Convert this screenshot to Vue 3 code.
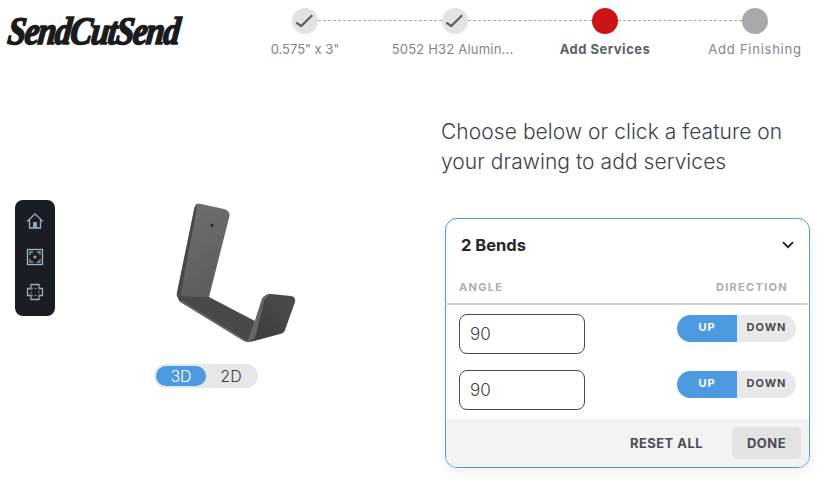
<script setup>
const steps = [
  { label: '0.575" x 3"', state: 'passed' },
  { label: '5052 H32 Alumin...', state: 'passed' },
  { label: 'Add Services', state: 'active' },
  { label: 'Add Finishing', state: 'todo' }
]
const rows = [90, 90]
</script>

<template>
  <div class="page">
    <header class="top">
      <div class="logo"><span class="logo-text">SendCutSend</span></div>
      <ol class="steps">
        <li v-for="s in steps" :key="s.label" class="step" :class="s.state">
          <span class="dot">
            <svg v-if="s.state === 'passed'" width="26" height="26" viewBox="0 0 26 26">
              <path d="M4.200 14.700 L9.200 18 L20.200 7.200" fill="none" stroke="#5b6168" stroke-width="2.200" />
            </svg>
          </span>
          <span class="label">{{ s.label }}</span>
        </li>
      </ol>
    </header>

    <main class="main">
      <section class="stage">
        <nav class="tools">
          <svg width="18" height="18" viewBox="0 0 18 18" fill="none" stroke="#9fb3c2" stroke-width="1.300">
            <path d="M1.200 9.500 L9 1.800 L16.800 9.500 M3.500 8 V16 H14.500 V8" />
            <rect x="7" y="10" width="4" height="6" fill="#8fa5b5" stroke="none" />
          </svg>
          <svg width="18" height="18" viewBox="0 0 18 18" fill="none" stroke-width="1.300">
            <rect x="1.500" y="1.500" width="15" height="15" stroke="#b0b0b6" />
            <path d="M4 7 V4 H7 M11 4 H14 V7 M14 11 V14 H11 M7 14 H4 V11" stroke="#6fa3c0" />
            <path d="M7.500 9 H10.500 M9 7.500 V10.500" stroke="#d0a070" />
          </svg>
          <svg width="18" height="18" viewBox="0 0 18 18" fill="none" stroke="#a0a8b0" stroke-width="1.300">
            <path d="M5 1.500 H13 V5.500 H16.500 V12.500 H13 V16.500 H5 V12.500 H1.500 V5.500 H5 Z" />
            <path d="M5 5.500 H13 V12.500 H5 Z" stroke-dasharray="2 1.500" stroke="#6f7780" />
          </svg>
        </nav>
        <div class="viewer">
          <svg class="model" width="170" height="160" viewBox="0 0 170 160">
            <defs>
              <linearGradient id="back" x1="0" y1="0" x2="0.3" y2="1">
                <stop offset="0" stop-color="#707070" />
                <stop offset="1" stop-color="#5e5e5e" />
              </linearGradient>
              <linearGradient id="tip" x1="1" y1="0" x2="0" y2="1">
                <stop offset="0" stop-color="#4c4c4c" />
                <stop offset="1" stop-color="#3c3c3c" />
              </linearGradient>
              <filter id="soft" x="-5%" y="-5%" width="110%" height="110%">
                <feGaussianBlur stdDeviation="0.400" />
              </filter>
            </defs>
            <g filter="url(#soft)">
              <path d="M57 14 Q58 13 61 14 L84 19 Q90 21 89.500 26 L69 107 L39 108 Q36 107 37 103 L54 20 Q55 15 57 14 Z" fill="url(#back)" />
              <path d="M57 14 Q55 15 54 20 L37 103 Q36 107 39 108 L40 108 L56.500 20 Z" fill="#4a4a4a" />
              <path d="M38 106 L69 107 L115 131 L108 152 L104 151 L42 113 Q37 110 38 106 Z" fill="#4a4a4a" />
              <path d="M42 111 L104 149 L108 152 L104 151 L42 113 Z" fill="#6a6a6a" />
              <path d="M115 131 L122 109 Q125 104 131 104 L151 106 Q156 107 155 112 L145 140 Q144 143 140 144 L114 151 Q110 152 108 152 Z" fill="url(#tip)" />
              <path d="M115 131 L122 109 Q125 104 131 104 L128 106 Q125 108 124 112 L115 148 L108 152 Z" fill="#666" />
              <circle cx="72" cy="35.500" r="1.700" fill="#2e2e2e" />
            </g>
          </svg>
          <div class="dim">
            <span class="dim-on">3D</span>
            <span class="dim-off">2D</span>
          </div>
        </div>
      </section>

      <section class="side">
        <h1 class="title">Choose below or click a feature on your drawing to add services</h1>
        <div class="card">
          <div class="card-head">
            <span class="card-name">2 Bends</span>
            <svg width="12" height="8" viewBox="0 0 12 8">
              <path d="M1 1.200 L6 6.200 L11 1.200" fill="none" stroke="#1c1f24" stroke-width="1.800" />
            </svg>
          </div>
          <div class="cols">
            <span>ANGLE</span>
            <span>DIRECTION</span>
          </div>
          <div class="rows">
            <div v-for="(r, i) in rows" :key="i" class="row">
              <div class="angle">{{ r }}</div>
              <div class="dir">
                <span class="dir-up">UP</span>
                <span class="dir-down">DOWN</span>
              </div>
            </div>
          </div>
          <div class="foot">
            <span class="reset">RESET ALL</span>
            <span class="done-btn">DONE</span>
          </div>
        </div>
      </section>
    </main>
  </div>
</template>

<style scoped>
.page {
  width: 828px;
  height: 495px;
  overflow: hidden;
  background: #fff;
  font-family: Inter, "Open Sans", sans-serif;
  color: #4a4f57;
}
.top {
  display: flex;
  height: 70px;
}
.logo {
  flex: none;
  width: 230px;
  box-sizing: border-box;
  padding: 11px 0 0 8px;
  font-family: "Liberation Serif", serif;
  font-style: italic;
  font-weight: 700;
  font-size: 33px;
  line-height: 40px;
  letter-spacing: -1.300px;
  color: #1b1b1d;
  -webkit-text-stroke: 1.400px #1b1b1d;
  white-space: nowrap;
}
.logo-text {
  display: inline-block;
  transform: scaleY(1.180) skewX(-7deg);
  transform-origin: left center;
}
.steps {
  flex: none;
  display: flex;
  margin: 0;
  padding: 8px 0 0;
  list-style: none;
}
.step {
  position: relative;
  flex: none;
  width: 150px;
  display: flex;
  flex-direction: column;
  align-items: center;
  gap: 7px;
}
.step:not(:last-child)::after {
  content: "";
  position: absolute;
  top: 12px;
  left: 88px;
  width: 124px;
  border-top: 1px dashed #a8a8a8;
}
.dot {
  width: 26px;
  height: 26px;
  border-radius: 50%;
  background: #e3e3e3;
}
.active .dot { background: #cc1417; }
.todo .dot { background: #a9a8ac; }
.label {
  font-size: 13px;
  line-height: 16px;
  color: #80858b;
  white-space: nowrap;
  letter-spacing: 0.200px;
}
.passed:first-child .label {
  letter-spacing: -0.050px;
}
.passed:nth-child(2) .label {
  margin-right: 5px;
}
.active .label {
  font-weight: 700;
  letter-spacing: 0.500px;
  color: #5b6169;
}
.todo .label {
  letter-spacing: 0.750px;
}
.main {
  display: flex;
}
.stage {
  flex: none;
  width: 441px;
  box-sizing: border-box;
  padding: 120px 0 0 15px;
  display: flex;
  align-items: flex-start;
  gap: 85px;
}
.tools {
  flex: none;
  margin-top: 10px;
  width: 40px;
  height: 116px;
  box-sizing: border-box;
  padding: 12px 0 15px;
  border-radius: 8px;
  background: #1a1e24;
  display: flex;
  flex-direction: column;
  align-items: center;
  justify-content: space-between;
}
.viewer {
  display: flex;
  flex-direction: column;
  align-items: flex-start;
}
.model {
  display: block;
}
.dim {
  margin: 14px 0 0 14px;
  width: 104px;
  height: 24px;
  box-sizing: border-box;
  padding: 2px;
  border-radius: 12px;
  background: #e6e8e8;
  display: flex;
  font-size: 16px;
  font-weight: 300;
  line-height: 20px;
  text-align: center;
}
.dim-on {
  width: 50px;
  border-radius: 10px;
  background: #4e9ae0;
  color: #fff;
}
.dim-off {
  flex: 1;
  color: #3a3d42;
}
.side {
  width: 387px;
}
.title {
  margin: 47px 0 0;
  width: 350px;
  font-size: 21px;
  line-height: 30px;
  font-weight: 300;
  letter-spacing: 0.060px;
  color: #3d4249;
}
.card {
  margin: 41px 0 0 4px;
  width: 365px;
  height: 250px;
  box-sizing: border-box;
  border: 1px solid #4e9ae0;
  border-radius: 12px;
  overflow: hidden;
  background: #fff;
  box-shadow: 0 3px 12px rgba(0, 0, 0, 0.07);
  display: flex;
  flex-direction: column;
}
.card-head {
  height: 52px;
  box-sizing: border-box;
  padding: 0 15px;
  display: flex;
  align-items: center;
  justify-content: space-between;
}
.card-name {
  font-size: 16.500px;
  font-weight: 700;
  color: #23262b;
}
.cols {
  height: 34px;
  box-sizing: border-box;
  padding: 9px 20px 0 12px;
  margin: 0 1px;
  border-bottom: 2px solid #cfcfcf;
  display: flex;
  justify-content: space-between;
  font-size: 11px;
  line-height: 14px;
  font-weight: 700;
  letter-spacing: 1.300px;
  color: #adadb2;
}
.rows {
  flex: 1;
  padding: 9px 13px 0;
  display: flex;
  flex-direction: column;
  gap: 16px;
}
.row {
  display: flex;
  justify-content: space-between;
  align-items: flex-start;
}
.angle {
  width: 126px;
  height: 40px;
  box-sizing: border-box;
  padding-left: 10px;
  border: 1px solid #444a53;
  border-radius: 8px;
  font-size: 17px;
  font-weight: 300;
  line-height: 38px;
  color: #3d4249;
}
.dir {
  margin-top: 1px;
  display: flex;
  height: 27px;
  font-size: 11px;
  line-height: 25px;
  font-weight: 700;
  letter-spacing: 1px;
  text-align: center;
}
.dir-up {
  width: 60px;
  border-radius: 14px 0 0 14px;
  background: #4e9ae0;
  color: #fff;
}
.dir-down {
  width: 59px;
  border-radius: 0 14px 14px 0;
  background: #e9e9e9;
  color: #4a4d54;
}
.foot {
  height: 48px;
  flex: none;
  box-sizing: border-box;
  padding: 0 8px 0 0;
  background: #f3f3f3;
  display: flex;
  align-items: center;
  justify-content: flex-end;
  gap: 29px;
  font-size: 13px;
  font-weight: 700;
  letter-spacing: 0.450px;
  color: #4a4d54;
}
.done-btn {
  width: 69px;
  height: 32px;
  border-radius: 5px;
  background: #e3e3e3;
  line-height: 32px;
  text-align: center;
}
</style>
